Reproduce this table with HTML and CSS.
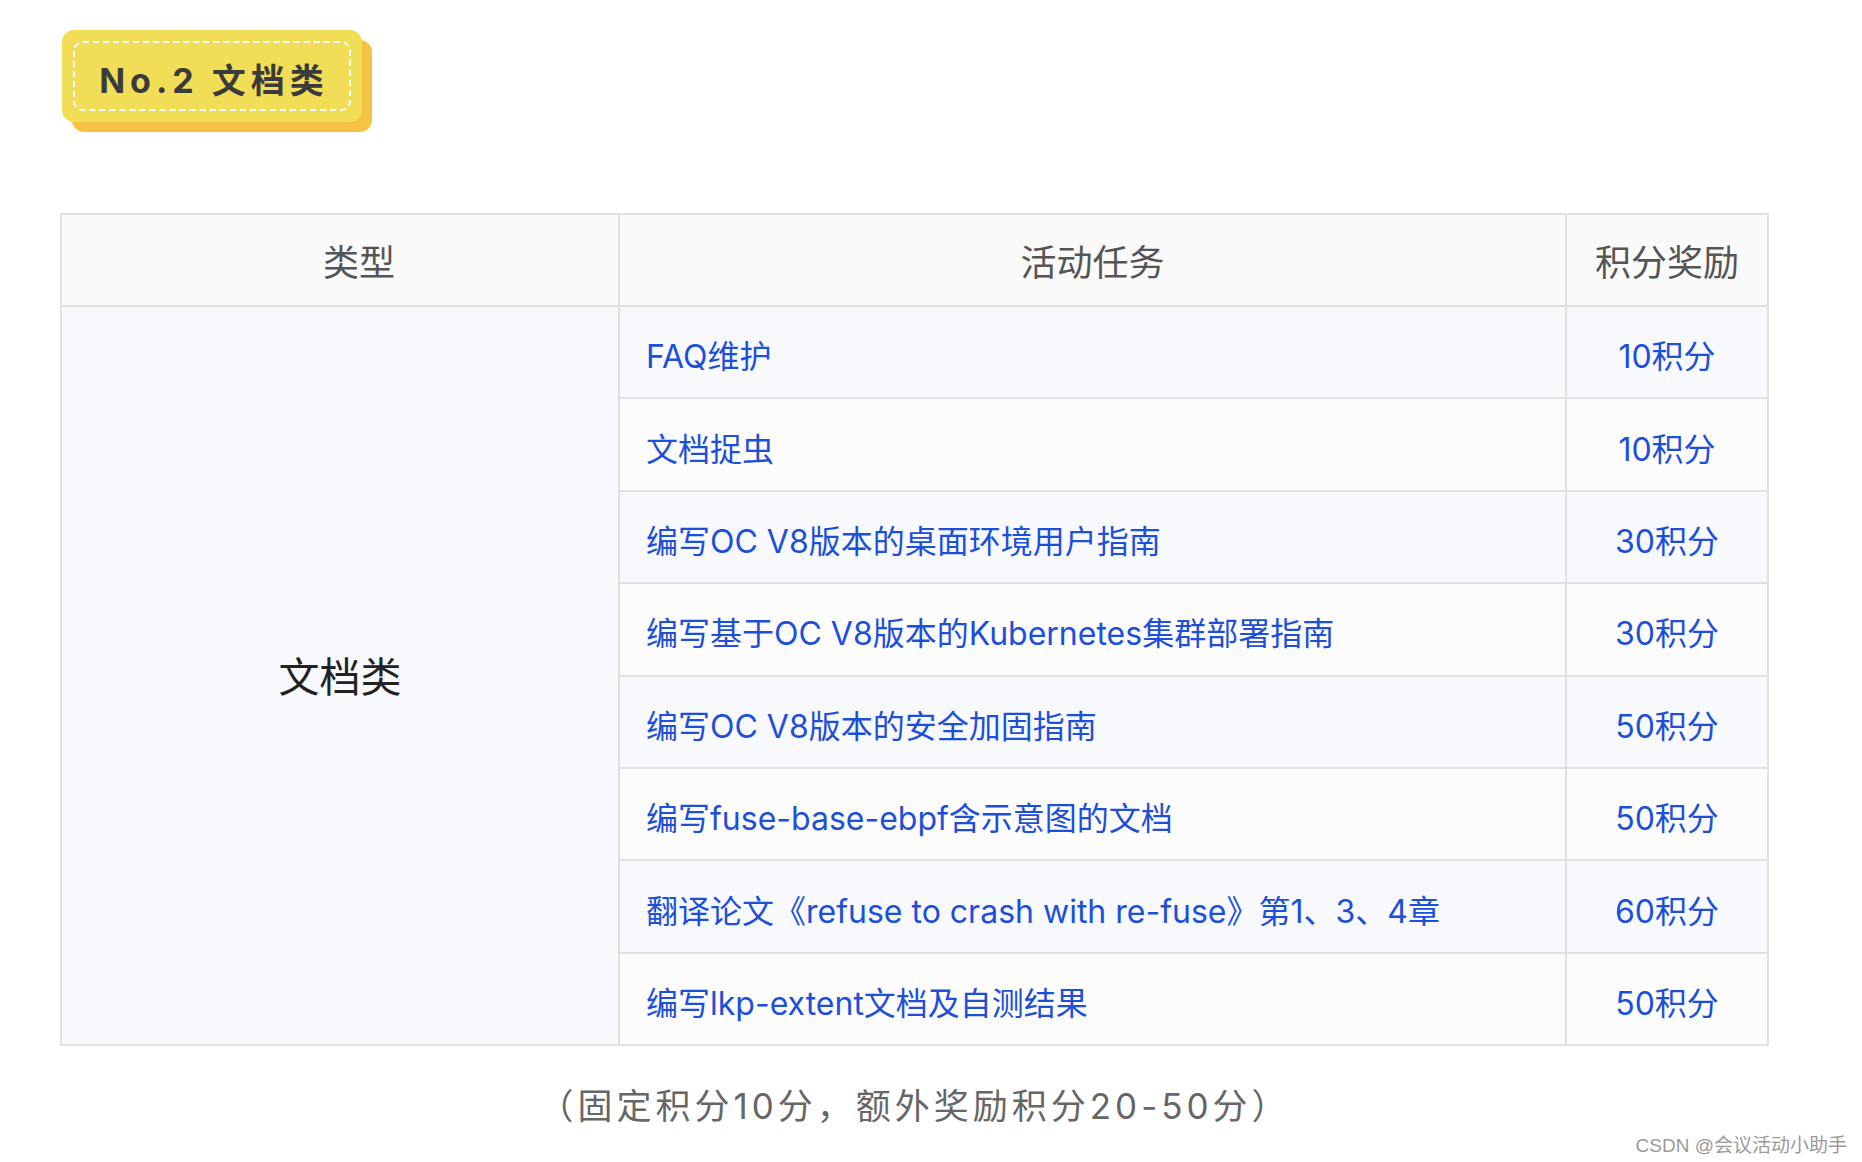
FILE: index.html
```html
<!DOCTYPE html>
<html lang="zh-CN">
<head>
<meta charset="utf-8">
<title>No.2 文档类</title>
<link rel="stylesheet" href="styles.css">
</head>
<body>
<div class="page">
  <div class="badge">
    <div class="badge-inner">No.2 文档类</div>
  </div>

  <div class="table">
    <div class="cell head head-type">类型</div>
    <div class="cell head">活动任务</div>
    <div class="cell head">积分奖励</div>

    <div class="cell type">文档类</div>

    <div class="cell task odd">FAQ维护</div>
    <div class="cell pts odd">10积分</div>

    <div class="cell task even">文档捉虫</div>
    <div class="cell pts even">10积分</div>

    <div class="cell task odd">编写OC V8版本的桌面环境用户指南</div>
    <div class="cell pts odd">30积分</div>

    <div class="cell task even">编写基于OC V8版本的Kubernetes集群部署指南</div>
    <div class="cell pts even">30积分</div>

    <div class="cell task odd">编写OC V8版本的安全加固指南</div>
    <div class="cell pts odd">50积分</div>

    <div class="cell task even">编写fuse-base-ebpf含示意图的文档</div>
    <div class="cell pts even">50积分</div>

    <div class="cell task odd">翻译论文《refuse to crash with re-fuse》第1、3、4章</div>
    <div class="cell pts odd">60积分</div>

    <div class="cell task even">编写lkp-extent文档及自测结果</div>
    <div class="cell pts even">50积分</div>
  </div>

  <p class="note">（固定积分10分，额外奖励积分20-50分）</p>
</div>
<div class="watermark">CSDN @会议活动小助手</div>
</body>
</html>
```

FILE: styles.css
```css
html, body {
  margin: 0;
  padding: 0;
  background: #ffffff;
}

body {
  font-family: Inter, "Noto Sans CJK SC", sans-serif;
  width: 1862px;
  height: 1162px;
  overflow: hidden;
  position: relative;
}

.page {
  padding: 30px 0 0 60px;
  width: 1709px;
}

.badge {
  margin-left: 2px;
  width: 300px;
  height: 92px;
  box-sizing: border-box;
  background: #f1de56;
  border-radius: 12px;
  box-shadow: 10px 10px 0 #f4c343;
  padding: 11px;
}

.badge-inner {
  height: 100%;
  box-sizing: border-box;
  border: 2px dashed #ffffff;
  border-radius: 10px;
  display: flex;
  align-items: center;
  justify-content: center;
  font-size: 34px;
  font-weight: 700;
  letter-spacing: 5px;
  color: #3b3b3b;
  padding: 5px 0 0 4px;
}

.table {
  margin-top: 91px;
  display: grid;
  grid-template-columns: 556px 945px 200px;
  grid-template-rows: 90px repeat(8, 90.4px);
  gap: 2px;
  padding: 2px;
  background: #e1e1e1;
}

.cell {
  display: flex;
  align-items: center;
}

.head {
  background: #fafafa;
  justify-content: center;
  font-size: 36px;
  color: #555555;
}

.head-type {
  padding-left: 38px;
}

.type {
  grid-column: 1;
  grid-row: 2 / span 8;
  background: #f7f9fc;
  justify-content: center;
  font-size: 41px;
  color: #222222;
  padding-bottom: 4px;
}

.task {
  padding: 4px 0 0 26px;
  font-size: 32px;
  color: #1e4fd9;
  white-space: nowrap;
}

.pts {
  justify-content: center;
  padding-top: 4px;
  font-size: 32px;
  color: #1e4fd9;
}

.odd {
  background: #f7f9fd;
}

.even {
  background: #fcfcfc;
}

.note {
  margin: 32px 0 0 0;
  text-align: center;
  font-size: 35px;
  letter-spacing: 4px;
  color: #666666;
}

.watermark {
  position: absolute;
  right: 15px;
  bottom: 5px;
  font-family: "Liberation Sans", "Noto Sans CJK SC", sans-serif;
  font-size: 19px;
  color: #9a9a9a;
}
```
